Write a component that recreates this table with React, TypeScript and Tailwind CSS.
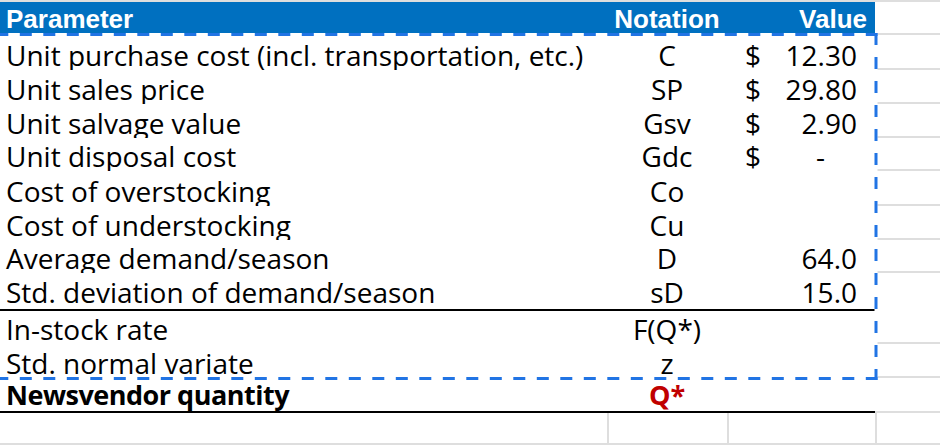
import React from 'react';

type Row = {
  label: string;
  note: string;
  dollar?: boolean;
  value?: string;
  valueCls?: string;
  rowCls: string;
  gridD: boolean;
};

const rows: Row[] = [
  { label: 'Unit purchase cost (incl. transportation, etc.)', note: 'C', dollar: true, value: '12.30', rowCls: 'h-[35px] pb-[1px]', gridD: true },
  { label: 'Unit sales price', note: 'SP', dollar: true, value: '29.80', rowCls: 'h-[34px] pb-[1px]', gridD: true },
  { label: 'Unit salvage value', note: 'Gsv', dollar: true, value: '2.90', rowCls: 'h-[34px] pb-[1px]', gridD: true },
  { label: 'Unit disposal cost', note: 'Gdc', dollar: true, value: '-', valueCls: 'pr-[50px]', rowCls: 'h-[33px] pb-[1px]', gridD: true },
  { label: 'Cost of overstocking', note: 'Co', rowCls: 'h-[35px] pb-[1px]', gridD: true },
  { label: 'Cost of understocking', note: 'Cu', rowCls: 'h-[34px] pb-[1px]', gridD: true },
  { label: 'Average demand/season', note: 'D', value: '64.0', rowCls: 'h-[33px] pb-[1px]', gridD: true },
  { label: 'Std. deviation of demand/season', note: 'sD', value: '15.0', rowCls: 'h-[38px] pb-[3px] border-b-2 border-black', gridD: false },
  { label: 'In-stock rate', note: 'F(Q*)', rowCls: 'h-[33px] pb-[1px]', gridD: true },
  { label: 'Std. normal variate', note: 'z', rowCls: 'h-[34px] pb-[1px]', gridD: true },
];

// marching-ants copy border round the selected range
function Dashes() {
  return (
    <svg className="absolute left-0 top-0 pointer-events-none" width="940" height="446">
      <g strokeWidth="3" fill="none">
        <line x1="0" y1="34.5" x2="877.5" y2="34.5" stroke="#ffffff" />
        <line x1="876" y1="33" x2="876" y2="380" stroke="#ffffff" />
        <line x1="0" y1="378.5" x2="877.5" y2="378.5" stroke="#ffffff" />
        <line x1="0" y1="34.5" x2="877.5" y2="34.5" stroke="#2174e4" strokeDasharray="12 11.5" strokeDashoffset="3.7" />
        <line x1="0" y1="378.5" x2="877.5" y2="378.5" stroke="#2174e4" strokeDasharray="12 11.5" strokeDashoffset="3.7" />
        <line x1="876" y1="33" x2="876" y2="380" stroke="#2174e4" strokeDasharray="12 12" />
      </g>
    </svg>
  );
}

export default function App() {
  return (
    <div className="relative w-[940px] h-[446px] overflow-hidden bg-white text-black font-['Open_Sans',sans-serif] text-[28px] leading-none">
      <div className="h-[2px] bg-[#dedede]" />

      {/* header */}
      <div className="grid grid-cols-[607px_120px_148px_1fr] h-[33px]">
        <div className="col-span-3 bg-[#0070c0] text-white font-['Liberation_Sans',Arial,sans-serif] font-bold text-[26px] grid grid-cols-[607px_120px_148px] items-end pb-[3px]">
          <span className="pl-[6px]">Parameter</span>
          <span className="text-center">Notation</span>
          <span className="text-right pr-[8px]">Value</span>
        </div>
        <div className="border-b-2 border-[#dedede]" />
      </div>

      {rows.map((r) => (
        <div key={r.label} className="grid grid-cols-[607px_120px_148px_1fr]">
          <div className={`col-span-3 grid grid-cols-[607px_120px_148px] items-end overflow-hidden ${r.rowCls}`}>
            <span className="pl-[6px] whitespace-nowrap">{r.label}</span>
            <span className="text-center">{r.note}</span>
            <span className="flex justify-between">
              <span className="pl-[18px]">{r.dollar ? '$' : ''}</span>
              <span className={r.valueCls ?? 'pr-[18px]'}>{r.value ?? ''}</span>
            </span>
          </div>
          <div className={r.gridD ? 'border-b-2 border-[#dedede]' : ''} />
        </div>
      ))}

      {/* result row */}
      <div className="grid grid-cols-[607px_120px_148px_1fr]">
        <div className="col-span-3 grid grid-cols-[607px_120px_148px] items-end overflow-hidden h-[35px] pb-[3px] border-b-2 border-black font-bold text-[27px]">
          <span className="pl-[6px] tracking-[-0.5px]">Newsvendor quantity</span>
          <span className="text-center text-[#c00000]">Q*</span>
          <span />
        </div>
        <div className="border-b-2 border-[#dedede]" />
      </div>

      {/* empty row */}
      <div className="grid grid-cols-[607px_120px_148px_1fr] h-[32px] border-b-2 border-[#dedede]">
        <div />
        <div className="border-l-2 border-[#dedede]" />
        <div className="border-l-2 border-[#dedede]" />
        <div className="border-l-2 border-[#dedede]" />
      </div>

      <Dashes />
    </div>
  );
}
